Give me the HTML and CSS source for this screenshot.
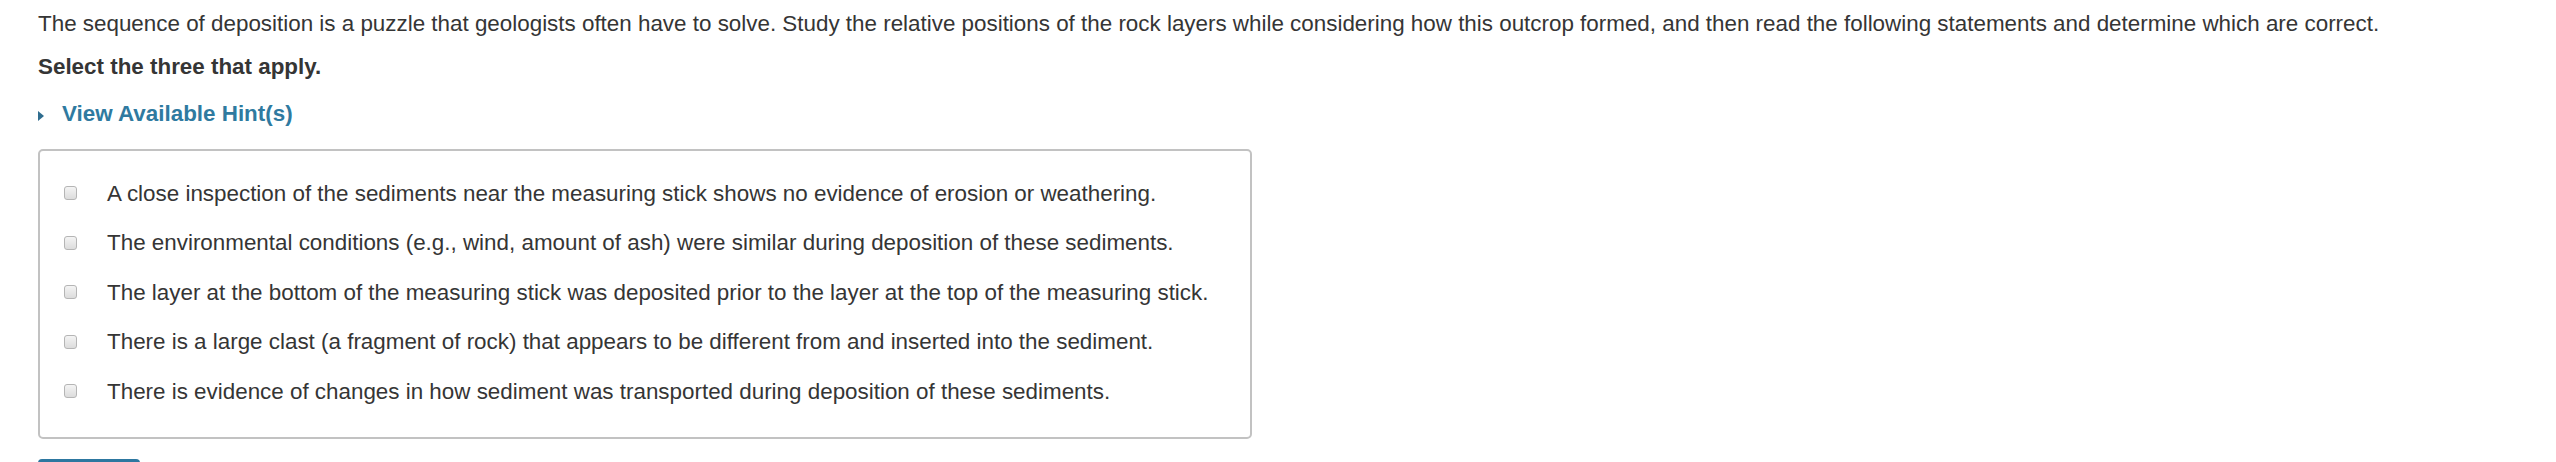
FILE: index.html
```html
<!DOCTYPE html>
<html>
<head>
<meta charset="utf-8">
<link rel="stylesheet" href="styles.css">
</head>
<body>
<div class="page">
  <p class="intro">The sequence of deposition is a puzzle that geologists often have to solve. Study the relative positions of the rock layers while considering how this outcrop formed, and then read the following statements and determine which are correct.</p>
  <p class="instr">Select the three that apply.</p>
  <a class="hint"><span class="tri"></span>View Available Hint(s)</a>
  <div class="box">
    <label class="opt"><span class="cb"></span><span class="txt">A close inspection of the sediments near the measuring stick shows no evidence of erosion or weathering.</span></label>
    <label class="opt"><span class="cb"></span><span class="txt">The environmental conditions (e.g., wind, amount of ash) were similar during deposition of these sediments.</span></label>
    <label class="opt"><span class="cb"></span><span class="txt">The layer at the bottom of the measuring stick was deposited prior to the layer at the top of the measuring stick.</span></label>
    <label class="opt"><span class="cb"></span><span class="txt">There is a large clast (a fragment of rock) that appears to be different from and inserted into the sediment.</span></label>
    <label class="opt"><span class="cb"></span><span class="txt">There is evidence of changes in how sediment was transported during deposition of these sediments.</span></label>
  </div>
  <div class="btn"></div>
</div>
</body>
</html>
```

FILE: styles.css
```css
html, body {
  margin: 0;
  padding: 0;
  background: #fff;
}
.page {
  padding: 10px 0 0 38px;
  font-family: "Liberation Sans", Arial, Helvetica, sans-serif;
  font-size: 22.4px;
  line-height: 27px;
  color: #353535;
}
.intro {
  margin: 0;
  white-space: nowrap;
}
.instr {
  margin: 15.5px 0 0 0;
  font-weight: bold;
}
.hint {
  display: flex;
  align-items: center;
  margin-top: 20px;
  color: #2f7aa0;
  font-weight: bold;
  height: 27px;
}
.tri {
  width: 0;
  height: 0;
  border-top: 5px solid transparent;
  border-bottom: 5px solid transparent;
  border-left: 6px solid #2f6d8f;
  margin: 6px 18px 0 0;
}
.box {
  margin-top: 22.5px;
  width: 1214px;
  height: 290px;
  border: 2px solid #c2c2c2;
  border-radius: 5px;
  box-sizing: border-box;
  display: flex;
  flex-direction: column;
  padding-top: 28.5px;
}
.opt {
  display: flex;
  align-items: center;
  height: 27px;
  margin-bottom: 22.5px;
}
.cb {
  width: 11px;
  height: 12px;
  border: 1px solid #b5b5b5;
  border-radius: 3px;
  background: linear-gradient(#f4f4f4, #dcdcdc);
  margin-left: 24px;
  margin-right: 30px;
  flex: none;
}
.txt {
  white-space: nowrap;
}
.btn {
  margin-top: 20px;
  width: 102px;
  height: 10px;
  background: #2d77a0;
  border-radius: 4px 4px 0 0;
}
```
